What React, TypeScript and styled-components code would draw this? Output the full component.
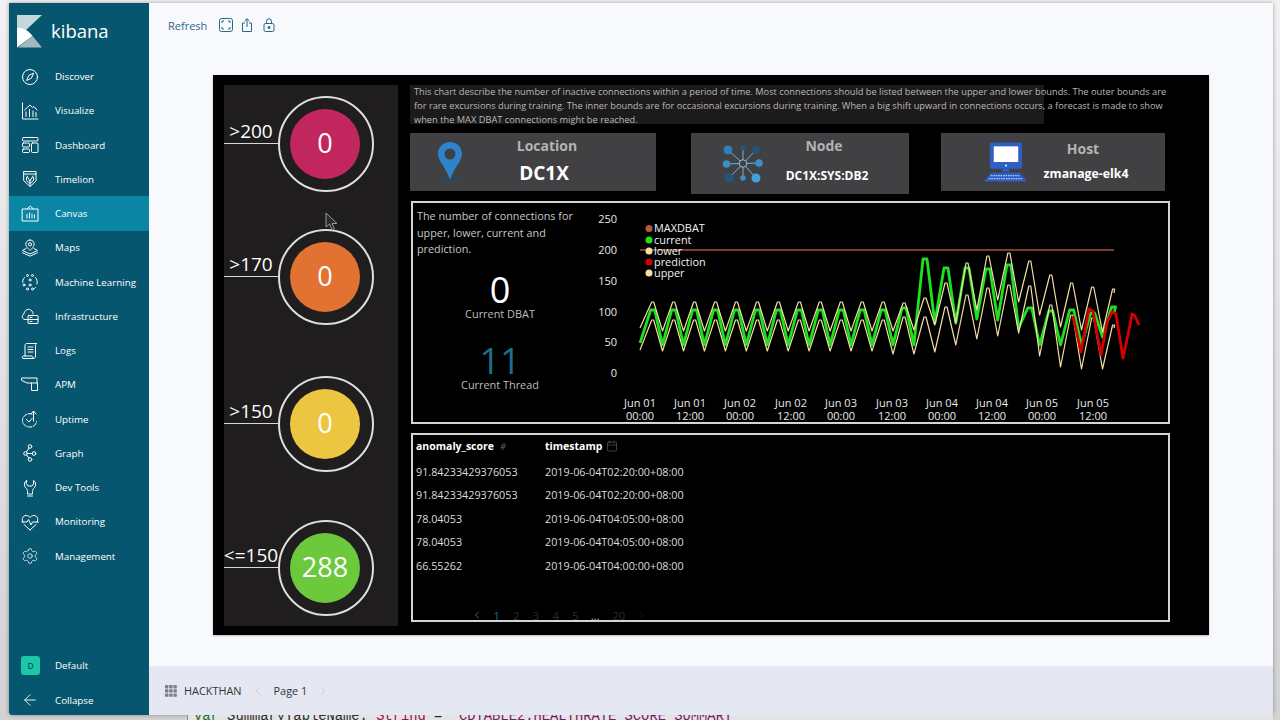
import React from 'react';
import styled, {createGlobalStyle} from 'styled-components';
import {ArrowLeft, Calendar, ChevronLeft, ChevronRight, Settings} from 'lucide-react';

const GlobalStyle = createGlobalStyle`
  html, body {
    margin: 0;
    padding: 0;
    background: #dcdcdc;
  }

  body {
    font-family: "Open Sans", "Liberation Sans", sans-serif;
  }
`;

const Page = styled.div`
  width: 1280px;
  height: 720px;
  overflow: hidden;
  padding: 3px 7px 0 9px;
  box-sizing: border-box;
  background: linear-gradient(#f2f2f2, #d2d2d2);
`;

const Frame = styled.div`
  display: flex;
  width: 1264px;
  height: 712px;
  border-radius: 0 0 3px 3px;
  overflow: hidden;
  box-shadow: 0 0 4px rgba(0, 0, 0, 0.35);
`;

const CodeStrip = styled.div`
  height: 5px;
  overflow: hidden;
  margin-left: 178px;
  padding-left: 6px;
  border-left: 1px solid #8e8e8e;
  background: #e4e4e4;
`;

const CodeLine = styled.div`
  margin-top: -5px;
  font: 13.8px/14px "Liberation Mono", monospace;
  white-space: pre;
  color: #2b2b2b;
`;

const CodeToken = styled.span<{$color: string}>`
  color: ${p => p.$color};
`;

const Sidebar = styled.nav`
  display: flex;
  flex-direction: column;
  width: 140px;
  flex: none;
  background: #07566f;
  color: #fff;
`;

const Brand = styled.div`
  display: flex;
  align-items: center;
  gap: 9px;
  height: 56.4px;
  padding: 0 0 0 8px;
  box-sizing: border-box;
`;

const BrandName = styled.span`
  font-size: 18.5px;
  line-height: 1;
  color: #fff;
`;

const NavRow = styled.div<{$active?: boolean}>`
  display: flex;
  align-items: center;
  gap: 16px;
  height: 34.26px;
  padding-left: 12px;
  font-size: 9.75px;
  font-weight: 500;
  color: #fff;
  white-space: nowrap;
  background: ${p => (p.$active ? '#0a85a4' : 'transparent')};

  svg {
    flex: none;
  }
`;

const SideFooter = styled.div`
  display: flex;
  flex-direction: column;
  gap: 5px;
  margin-top: auto;
  padding-bottom: 0;

  ${NavRow} {
    height: 30px;
  }
`;

const Avatar = styled.span`
  display: flex;
  align-items: center;
  justify-content: center;
  width: 19px;
  height: 19px;
  margin-right: -1px;
  border-radius: 3px;
  background: #1cc7a6;
  color: #07566f;
  font-size: 8.5px;
  font-weight: 600;
`;

const Main = styled.main`
  display: flex;
  flex-direction: column;
  flex: 1;
  min-width: 0;
  background: #f8f9fd;
`;

const TopBar = styled.div`
  display: flex;
  align-items: center;
  height: 44px;
  padding-left: 19px;
  color: #2c6682;
  font-size: 11px;
`;

const RefreshLabel = styled.span`
  margin-right: 12px;
`;

const TopIcon = styled.svg<{$gap: number}>`
  margin-right: ${p => p.$gap}px;
`;

const Stage = styled.div`
  flex: 1;
  padding: 28px 0 0 64px;
`;

const Workpad = styled.section`
  display: flex;
  gap: 12px;
  width: 996px;
  height: 560px;
  padding: 10px 0 0 11px;
  box-sizing: border-box;
  background: #000;
  box-shadow: 0 1px 2px rgba(0, 0, 0, 0.25);
  position: relative;
`;

const GaugePanel = styled.div`
  display: flex;
  flex-direction: column;
  width: 174px;
  height: 541px;
  flex: none;
  background: #1f1d1e;
`;

const GaugeRow = styled.div<{$top: number}>`
  display: flex;
  margin-top: ${p => p.$top}px;
`;

const GaugeLabel = styled.div`
  width: 54px;
  height: 48px;
  display: flex;
  align-items: flex-end;
  justify-content: center;
  box-sizing: border-box;
  border-bottom: 1.5px solid #d8d8d8;
  color: #fff;
  font-size: 19px;
  line-height: 24px;
  white-space: nowrap;
`;

const GaugeRing = styled.div`
  display: flex;
  align-items: center;
  justify-content: center;
  width: 96px;
  height: 96px;
  padding-right: 2px;
  box-sizing: border-box;
  border: 2px solid #dedede;
  border-radius: 50%;
`;

const GaugeDot = styled.div<{$color: string}>`
  display: flex;
  align-items: center;
  justify-content: center;
  flex: none;
  width: 70px;
  height: 70px;
  padding-bottom: 3px;
  box-sizing: border-box;
  border-radius: 50%;
  background: ${p => p.$color};
  color: #fff;
  font-size: 27px;
`;

const Cursor = styled.svg`
  position: absolute;
  left: 112px;
  top: 137px;
`;

const Column = styled.div`
  display: flex;
  flex-direction: column;
  width: 760px;
`;

const Description = styled.p`
  margin: 0;
  height: 39px;
  padding-left: 4px;
  background: linear-gradient(#1c1a1b, #1c1a1b) no-repeat;
  background-size: 634px 100%;
  color: #b9b9b9;
  font-size: 9.28px;
  line-height: 14px;
  white-space: nowrap;
`;

const CardRow = styled.div`
  display: flex;
  align-items: flex-start;
  height: 77px;
  padding-top: 9px;
  box-sizing: border-box;
`;

const Card = styled.div<{$width: number; $height: number; $left: number}>`
  display: flex;
  width: ${p => p.$width}px;
  height: ${p => p.$height}px;
  margin-left: ${p => p.$left}px;
  background: #414042;
`;

const CardIcon = styled.div<{$width: number; $pad?: number}>`
  display: flex;
  align-items: center;
  justify-content: center;
  width: ${p => p.$width}px;
  padding-left: ${p => p.$pad ?? 0}px;
  box-sizing: border-box;
  flex: none;
`;

const CardText = styled.div<{$width: number; $top: number}>`
  display: flex;
  flex-direction: column;
  align-items: center;
  width: ${p => p.$width}px;
  padding-top: ${p => p.$top}px;
`;

const CardTitle = styled.div<{$nudge?: number}>`
  margin-right: ${p => p.$nudge ?? 0}px;
  color: #b4b4b4;
  font-size: 14px;
  font-weight: 700;
  line-height: 20px;
`;

const CardValue = styled.div<{$size: number; $gap: number; $nudge?: number}>`
  margin-top: ${p => p.$gap}px;
  margin-right: ${p => p.$nudge ?? 0}px;
  color: #fff;
  font-size: ${p => p.$size}px;
  font-weight: 700;
  line-height: 22px;
  white-space: nowrap;
`;

const ChartBox = styled.div`
  display: flex;
  width: 759px;
  height: 223px;
  margin-left: 1px;
  box-sizing: border-box;
  border: 2px solid #d4d4d4;
`;

const ChartIntro = styled.div`
  display: flex;
  flex-direction: column;
  align-items: center;
  width: 177px;
  flex: none;
  padding: 5px 3px 0 0;
  box-sizing: border-box;
`;

const ChartNote = styled.div`
  width: 100%;
  height: 50px;
  padding-left: 4px;
  box-sizing: border-box;
  color: #c8c8c8;
  font-size: 10.8px;
  line-height: 16.5px;
  white-space: nowrap;
`;

const StatValue = styled.div<{$color: string; $top: number}>`
  margin-top: ${p => p.$top}px;
  color: ${p => p.$color};
  font-size: 36px;
  line-height: 34px;
`;

const StatLabel = styled.div`
  color: #bdbdbd;
  font-size: 10.9px;
  line-height: 14px;
`;

const TableBox = styled.div`
  display: flex;
  flex-direction: column;
  width: 759px;
  height: 189px;
  margin: 9px 0 0 1px;
  padding-left: 3px;
  box-sizing: border-box;
  border: 2px solid #d4d4d4;
`;

const TableRow = styled.div<{$head?: boolean}>`
  display: grid;
  flex: none;
  grid-template-columns: 129px 1fr;
  align-items: center;
  height: ${p => (p.$head ? 22.5 : 23.5)}px;
  padding-bottom: ${p => (p.$head ? 2 : 0)}px;
  color: ${p => (p.$head ? '#fff' : '#dcdcdc')};
  font-size: ${p => (p.$head ? 10.5 : 10.8)}px;
  font-weight: ${p => (p.$head ? 700 : 400)};
`;

const HeadCell = styled.span`
  display: flex;
  align-items: center;
  gap: 4px;
`;

const TypeMark = styled.span`
  color: #666;
  font-size: 9px;
  font-style: italic;
  font-weight: 400;
  margin-left: 2px;
`;

const Pager = styled.div`
  display: flex;
  flex: none;
  align-items: center;
  height: 14px;
  margin-top: 31px;
  padding-left: 51px;
`;

const PagerItem = styled.span<{$state?: 'current' | 'dim' | 'more'; $width?: number}>`
  display: flex;
  align-items: center;
  justify-content: center;
  width: ${p => p.$width ?? 19.7}px;
  font-size: 11px;
  color: ${p => (p.$state === 'current' ? '#1a6aa0' : p.$state === 'more' ? '#bbb' : '#2e2e2e')};
`;

const BottomBar = styled.footer`
  display: flex;
  align-items: center;
  height: 49px;
  padding-left: 16px;
  background: #e5e8f2;
  color: #30343a;
  font-size: 10.9px;
`;

const WorkpadName = styled.span`
  margin-left: 7px;
`;

const PageLabel = styled.span`
  margin: 0 9px;
`;

const PageChevron = styled.span`
  display: flex;
  margin-left: 9px;
  color: #b9bdc8;
`;

const NextChevron = styled(PageChevron)`
  margin-left: 0;
`;

const CHART_COLORS = {max: '#a8533c', green: '#1fe01f', cream: '#f4dfa4', red: '#d40000'};

const Icon = ({children}: {children: React.ReactNode}) => (
  <svg width="18" height="18" viewBox="0 0 18 18" fill="none" stroke="#fff" strokeWidth="1" strokeLinecap="round" strokeLinejoin="round">
    {children}
  </svg>
);

const NAV_ITEMS: {label: string; active?: boolean; icon: React.ReactNode}[] = [
  {
    label: 'Discover',
    icon: <Icon><circle cx="9" cy="9" r="7.5" /><path d="M12.5 5.5 10.3 10.3 5.5 12.5 7.7 7.7Z" /></Icon>,
  },
  {
    label: 'Visualize',
    icon: <Icon><path d="M1.5 1v16H17M3.5 8 9 3l2.5 2.5L13 4.5l3 3.5M5 14.5V10M8.5 14.5V7.5M12 14.5V9M15 14.5V10.5" /></Icon>,
  },
  {
    label: 'Dashboard',
    icon: <Icon><rect x="1.5" y="1.5" width="15.5" height="3.5" rx="1" /><rect x="1.5" y="7" width="7" height="4" rx="1" /><rect x="1.5" y="13" width="7" height="3.5" rx="1" /><rect x="10.5" y="7" width="6.5" height="9.5" rx="1" /></Icon>,
  },
  {
    label: 'Timelion',
    icon: <Icon><path d="M3 1.5h12V11l-6 5.5L3 11ZM3 4h12M6 6l3 5 3-5M9 11v5M5.5 7.5v3l3.5 3 3.5-3v-3" /></Icon>,
  },
  {
    label: 'Canvas',
    active: true,
    icon: <Icon><rect x="1.5" y="4" width="15.5" height="12" /><path d="M6 4l3.2-3L12.5 4M6 13V9.5M8.5 13V8M11 13V9M13.5 13v-3" /></Icon>,
  },
  {
    label: 'Maps',
    icon: <Icon><path d="M9 1C6.5 1 4.8 3 4.8 5.3 4.8 8 9 11.5 9 11.5s4.2-3.5 4.2-6.2C13.2 3 11.5 1 9 1Z" /><circle cx="9" cy="5.3" r="1.6" /><path d="M5 9.5 1.5 11.5 9 15l7.5-3.5L13 9.5M1.5 13.7 9 17.2l7.5-3.5" /></Icon>,
  },
  {
    label: 'Machine Learning',
    icon: <Icon><circle cx="6.5" cy="2.5" r="1" /><circle cx="11.5" cy="2.5" r="1" /><circle cx="9" cy="7" r="1" /><circle cx="3" cy="12" r="1" /><circle cx="9" cy="12" r="1" /><circle cx="6.5" cy="16" r="1" /><circle cx="11.5" cy="16" r="1" /><path d="M3.5 4.5C2 6 1.5 8 1.8 9.5M14.5 4.5C16 6 16.5 8.5 16 11M14.5 14.5l-1 .8" /></Icon>,
  },
  {
    label: 'Infrastructure',
    icon: <Icon><path d="M6 12.5H4C.5 12 .5 8 3 7c0-4 5-6.5 8-3 .8 1 1.2 2 1.2 3" /><rect x="7" y="8.5" width="10" height="8" rx=".5" /><path d="M7 12.5h10M9 10.5h2M9 14.5h2" /></Icon>,
  },
  {
    label: 'Logs',
    icon: <Icon><path d="M4 14V3.5C4 2 5 1.5 6 1.5h10C15 1.5 14.5 2.5 14.5 3.5V14c0 1.5-1 2.5-2 2.5H2c-1 0-1-2.5.5-2.5H11c.5 0 .5 2.5 1.5 2.5M7 5h5M7 7.5h5M7 10h5" /></Icon>,
  },
  {
    label: 'APM',
    icon: <Icon><path d="M1 2h15v5H6L1 4.5ZM10.5 7v7.5h6V7" /></Icon>,
  },
  {
    label: 'Uptime',
    icon: <Icon><path d="M11 4C6 2.5 1.5 6 1.5 10.5s4 6.5 7.5 6.5 6-2 6.5-5.5" strokeDasharray="4 1.5" /><path d="M12.5 11V1.5M10 4l2.5-3L15 4M5.5 9.5 8 12l3-3.5" /></Icon>,
  },
  {
    label: 'Graph',
    icon: <Icon><circle cx="9" cy="2.5" r="1.8" /><circle cx="4.5" cy="9.5" r="1.8" /><circle cx="13" cy="9.5" r="1.8" /><circle cx="9" cy="15.5" r="1.8" /><path d="M8 4 5.5 8M6.3 9.5h4.9M5.5 11 8 14" /></Icon>,
  },
  {
    label: 'Dev Tools',
    icon: <Icon><path d="M5.5 1.5C3 3 2.5 7 5 9c1 1 1.5 2 1.5 3.5V15h5v-2.5c0-1.500.5-2.500 1.500-3.500 2.500-2 2-6-.5-7.500V5L11 7H7L5.500 5ZM6.500 17h5" /></Icon>,
  },
  {
    label: 'Monitoring',
    icon: <Icon><path d="M9 17 3 11.5M9 17l6-5.500M2 9C0 6 2 2.500 5 2.500 7 2.500 8 3.500 9 4.500c1-1 2-2 4-2 3 0 5 3.500 3 6.500M.8 9H6l1.500-2.500L10 12l1.500-3h6" /></Icon>,
  },
  {
    label: 'Management',
    icon: <Settings size={18} strokeWidth={1} color="#fff" />,
  },
];

const GAUGES = [
  {label: '>200', value: '0', color: '#c1265f', top: 11},
  {label: '>170', value: '0', color: '#e27232', top: 37},
  {label: '>150', value: '0', color: '#ecc640', top: 51},
  {label: '<=150', value: '288', color: '#6cc93c', top: 48},
];

const TABLE_ROWS = [
  ['91.84233429376053', '2019-06-04T02:20:00+08:00'],
  ['91.84233429376053', '2019-06-04T02:20:00+08:00'],
  ['78.04053', '2019-06-04T04:05:00+08:00'],
  ['78.04053', '2019-06-04T04:05:00+08:00'],
  ['66.55262', '2019-06-04T04:00:00+08:00'],
];

// first twelve cycles are steady, the rest was read off the picture
const steady = (value: number, count: number) => Array.from({length: count}, () => value);

const SERIES = {
  upper: {
    start: 328,
    end: 293,
    flat: 1,
    peaks: [...steady(302, 12), 303, 298, 283, 263, 256, 253, 261, 275, 283, 287, 289],
    troughs: [...steady(331, 12), 330, 325, 323, 310, 300, 302, 315, 327, 330, 332],
  },
  lower: {
    start: 350,
    end: 328,
    flat: 1,
    peaks: [...steady(320, 12), 317, 317, 307, 295, 288, 285, 286, 305, 315, 318, 325],
    troughs: [...steady(351, 11), 354, 354, 352, 345, 339, 336, 333, 356, 367, 369, 369],
  },
  current: {
    start: 343,
    end: 313,
    flat: 2,
    peaks: [...steady(310, 12), 308, 259, 268, 268, 269, 265, 308, 311, 310, 313, 307],
    troughs: [...steady(345, 12), 345, 323, 323, 319, 320, 328, 345, 345, 345, 337],
  },
};

const toPoints = ({start, end, flat, peaks, troughs}: {start: number; end: number; flat: number; peaks: number[]; troughs: number[]}) => {
  const points = [`640,${start}`];
  peaks.forEach((peak, i) => {
    const x = 652.7 + 20.95 * i;
    points.push(`${(x - flat).toFixed(1)},${peak}`, `${(x + flat).toFixed(1)},${peak}`);
    if (i < troughs.length) {
      points.push(`${(x + 9.8).toFixed(1)},${troughs[i]}`);
    }
  });
  points.push(`1114,${end}`);
  return points.join(' ');
};

const Y_TICKS = [
  {label: '250', y: 219},
  {label: '200', y: 250},
  {label: '150', y: 281},
  {label: '100', y: 312},
  {label: '50', y: 342},
  {label: '0', y: 373},
];

const X_TICKS = [
  {x: 640, day: 'Jun 01', time: '00:00'},
  {x: 690, day: 'Jun 01', time: '12:00'},
  {x: 740, day: 'Jun 02', time: '00:00'},
  {x: 791, day: 'Jun 02', time: '12:00'},
  {x: 841, day: 'Jun 03', time: '00:00'},
  {x: 892, day: 'Jun 03', time: '12:00'},
  {x: 942, day: 'Jun 04', time: '00:00'},
  {x: 992, day: 'Jun 04', time: '12:00'},
  {x: 1042, day: 'Jun 05', time: '00:00'},
  {x: 1093, day: 'Jun 05', time: '12:00'},
];

const LEGEND = [
  {label: 'MAXDBAT', y: 228.5, color: '#b5583f'},
  {label: 'current', y: 240, color: CHART_COLORS.green},
  {label: 'lower', y: 251, color: CHART_COLORS.cream},
  {label: 'prediction', y: 262, color: CHART_COLORS.red},
  {label: 'upper', y: 273, color: CHART_COLORS.cream},
];

const Chart = () => (
  <svg width="577" height="219" viewBox="590 203 577 219" fontFamily="'Open Sans', sans-serif" fontSize="11" fill="#e8e8e8">
    {Y_TICKS.map(t => (
      <text key={t.label} x="617" y={t.y + 4} textAnchor="end">{t.label}</text>
    ))}
    {X_TICKS.map(t => (
      <text key={t.x} x={t.x} textAnchor="middle">
        <tspan x={t.x} y="407">{t.day}</tspan>
        <tspan x={t.x} y="420">{t.time}</tspan>
      </text>
    ))}
    <line x1="640" x2="1114" y1="250" y2="250" stroke={CHART_COLORS.max} strokeWidth="1.5" />
    <polyline points={toPoints(SERIES.current)} fill="none" stroke={CHART_COLORS.green} strokeWidth="2.8" strokeLinejoin="round" />
    <polyline points={toPoints(SERIES.lower)} fill="none" stroke={CHART_COLORS.cream} strokeWidth="1.2" strokeLinejoin="round" />
    <polyline points="1073,316 1081,352 1089,309 1093,311 1101,355 1107,322 1112,312 1116,314 1123,358 1129,330 1132,314 1135,316 1139,325" fill="none" stroke={CHART_COLORS.red} strokeWidth="2.8" strokeLinejoin="round" />
    <polyline points={toPoints(SERIES.upper)} fill="none" stroke={CHART_COLORS.cream} strokeWidth="1.2" strokeLinejoin="round" />
    {LEGEND.map(item => (
      <g key={item.label}>
        <circle cx="649" cy={item.y} r="3.5" fill={item.color} />
        <text x="654" y={item.y + 3.5} fontSize="10.9" fill="#f2f2f2">{item.label}</text>
      </g>
    ))}
  </svg>
);

const KibanaLogo = () => (
  <svg width="25" height="33" viewBox="0 0 25 33">
    <path d="M0 0h25L8 16 0 12.5Z" fill="#c4d7db" />
    <path d="M0 12.5C7 13 12 16 15.5 21L0 32.5Z" fill="#fff" />
    <path d="M15.5 21 25 32.5H1Z" fill="#a2b8bd" />
  </svg>
);

const PinIcon = () => (
  <svg width="26" height="42" viewBox="0 0 26 42">
    <ellipse cx="13" cy="38" rx="11" ry="3" fill="none" stroke="#1f4f7d" strokeWidth="1" />
    <path d="M13 1C6 1 1 6.5 1 13c0 7 8 13 12 26 4-13 12-19 12-26C25 6.5 20 1 13 1Z" fill="#2f82cc" />
    <circle cx="13" cy="13" r="5.5" fill="#414042" />
  </svg>
);

const NodeIcon = () => {
  const outer = [
    {x: 5, y: 5, r: 4.5, c: '#2d7fc0'},
    {x: 20, y: 3, r: 2.5, c: '#24557c'},
    {x: 33, y: 5, r: 3.8, c: '#24557c'},
    {x: 3.5, y: 19, r: 3.8, c: '#3a8ec9'},
    {x: 36, y: 18, r: 3.8, c: '#3a8ec9'},
    {x: 6, y: 33, r: 4.5, c: '#24557c'},
    {x: 20, y: 33, r: 2.8, c: '#3a8ec9'},
    {x: 33, y: 33, r: 4.5, c: '#43a0dc'},
  ];
  return (
    <svg width="40" height="38" viewBox="0 0 40 38">
      {outer.map(n => (
        <g key={`${n.x}-${n.y}`}>
          <line x1="20" y1="18.5" x2={n.x} y2={n.y} stroke="#6eb4e0" strokeWidth="1" />
          <circle cx={n.x} cy={n.y} r={n.r} fill={n.c} />
        </g>
      ))}
      <circle cx="20" cy="18.5" r="3.8" fill="#414042" stroke="#8cc6ea" strokeWidth="1" />
    </svg>
  );
};

const HostIcon = () => (
  <svg width="46" height="41" viewBox="0 0 46 41">
    <rect x="7" y="0" width="33" height="27" rx="2" fill="#2f5fc4" />
    <rect x="11" y="4" width="25" height="16" fill="#fff" />
    <circle cx="23.5" cy="23.5" r="1" fill="#fff" />
    <rect x="20" y="27" width="7" height="3" fill="#2f5fc4" />
    <path d="M8 31h30l7 9H1Z" fill="#2f5fc4" />
    <path d="M8 34h30M6 37h34" stroke="#bcd0f5" strokeWidth="1.2" strokeDasharray="1.5 1" />
  </svg>
);

const WorkpadGrid = () => (
  <svg width="12" height="12" viewBox="0 0 12 12" fill="#7b7f8a">
    {[0, 4.2, 8.4].flatMap(y => [0, 4.2, 8.4].map(x => <rect key={`${x}-${y}`} x={x} y={y} width="3.4" height="3.4" rx=".6" />))}
  </svg>
);

const App = () => (
  <>
    <GlobalStyle />
    <Page>
      <Frame>
        <Sidebar>
          <Brand>
            <KibanaLogo />
            <BrandName>kibana</BrandName>
          </Brand>
          {NAV_ITEMS.map(item => (
            <NavRow key={item.label} $active={item.active}>
              {item.icon}
              {item.label}
            </NavRow>
          ))}
          <SideFooter>
            <NavRow>
              <Avatar>D</Avatar>
              Default
            </NavRow>
            <NavRow>
              <ArrowLeft size={18} strokeWidth={1.2} color="#fff" />
              Collapse
            </NavRow>
          </SideFooter>
        </Sidebar>
        <Main>
          <TopBar>
            <RefreshLabel>Refresh</RefreshLabel>
            <TopIcon $gap={7.5} width="14" height="14" viewBox="0 0 14 14" fill="none" stroke="#2c6682" strokeWidth="1">
              <rect x=".5" y=".5" width="13" height="13" rx="2" />
              <path d="M3 5V3h2M9 3h2v2M11 9v2H9M5 11H3V9" />
            </TopIcon>
            <TopIcon $gap={10} width="12" height="14" viewBox="0 0 12 14" fill="none" stroke="#2c6682" strokeWidth="1">
              <path d="M4 5H1.5v8.5h9V5H8M6 9V.8M3.5 3 6 .8 8.5 3" />
            </TopIcon>
            <TopIcon $gap={0} width="12" height="14" viewBox="0 0 12 14" fill="none" stroke="#2c6682" strokeWidth="1">
              <rect x="1" y="5.5" width="10" height="8" rx="1.5" />
              <path d="M3.5 5.5V3.3a2.5 2.5 0 0 1 5 0v2.2" />
              <circle cx="6" cy="9.5" r="1" fill="#2c6682" />
            </TopIcon>
          </TopBar>
          <Stage>
            <Workpad>
              <GaugePanel>
                {GAUGES.map(gauge => (
                  <GaugeRow key={gauge.label} $top={gauge.top}>
                    <GaugeLabel>{gauge.label}</GaugeLabel>
                    <GaugeRing>
                      <GaugeDot $color={gauge.color}>{gauge.value}</GaugeDot>
                    </GaugeRing>
                  </GaugeRow>
                ))}
              </GaugePanel>
              <Column>
                <Description>
                  This chart describe the number of inactive connections within a period of time. Most connections should be listed between the upper and lower bounds. The outer bounds are
                  <br />
                  for rare excursions during training. The inner bounds are for occasional excursions during training. When a big shift upward in connections occurs, a forecast is made to show
                  <br />
                  when the MAX DBAT connections might be reached.
                </Description>
                <CardRow>
                  <Card $width={246} $height={58} $left={0}>
                    <CardIcon $width={79}><PinIcon /></CardIcon>
                    <CardText $width={116} $top={3}>
                      <CardTitle>Location</CardTitle>
                      <CardValue $size={19} $gap={6} $nudge={6}>DC1X</CardValue>
                    </CardText>
                  </Card>
                  <Card $width={218} $height={61} $left={35}>
                    <CardIcon $width={104}><NodeIcon /></CardIcon>
                    <CardText $width={64} $top={3}>
                      <CardTitle $nudge={6}>Node</CardTitle>
                      <CardValue $size={12} $gap={9}>DC1X:SYS:DB2</CardValue>
                    </CardText>
                  </Card>
                  <Card $width={224} $height={58} $left={32}>
                    <CardIcon $width={87} $pad={42}><HostIcon /></CardIcon>
                    <CardText $width={110} $top={6}>
                      <CardTitle>Host</CardTitle>
                      <CardValue $size={12.3} $gap={4} $nudge={-6}>zmanage-elk4</CardValue>
                    </CardText>
                  </Card>
                </CardRow>
                <ChartBox>
                  <ChartIntro>
                    <ChartNote>
                      The number of connections for
                      <br />
                      upper, lower, current and
                      <br />
                      prediction.
                    </ChartNote>
                    <StatValue $color="#fff" $top={15}>0</StatValue>
                    <StatLabel>Current DBAT</StatLabel>
                    <StatValue $color="#1d6f8e" $top={23}>11</StatValue>
                    <StatLabel>Current Thread</StatLabel>
                  </ChartIntro>
                  <Chart />
                </ChartBox>
                <TableBox>
                  <TableRow $head>
                    <HeadCell>anomaly_score <TypeMark>#</TypeMark></HeadCell>
                    <HeadCell>timestamp <Calendar size={12} strokeWidth={1} color="#777" /></HeadCell>
                  </TableRow>
                  {TABLE_ROWS.map(([score, time], i) => (
                    <TableRow key={i}>
                      <span>{score}</span>
                      <span>{time}</span>
                    </TableRow>
                  ))}
                  <Pager>
                    <PagerItem $state="more"><ChevronLeft size={12} strokeWidth={1} /></PagerItem>
                    <PagerItem $state="current">1</PagerItem>
                    <PagerItem $state="dim">2</PagerItem>
                    <PagerItem $state="dim">3</PagerItem>
                    <PagerItem $state="dim">4</PagerItem>
                    <PagerItem $state="dim">5</PagerItem>
                    <PagerItem $state="more">...</PagerItem>
                    <PagerItem $state="dim" $width={28}>20</PagerItem>
                    <PagerItem $state="dim" $width={19}><ChevronRight size={12} strokeWidth={1} /></PagerItem>
                  </Pager>
                </TableBox>
              </Column>
              <Cursor width="14" height="19" viewBox="0 0 14 19">
                <path d="M1 1v14l3.5-3 2.5 6 2.5-1-2.5-5.5H12Z" fill="#2a2a2a" stroke="#9a9a9a" strokeWidth="1" />
              </Cursor>
            </Workpad>
          </Stage>
          <BottomBar>
            <WorkpadGrid />
            <WorkpadName>HACKTHAN</WorkpadName>
            <PageChevron><ChevronLeft size={14} strokeWidth={1} /></PageChevron>
            <PageLabel>Page 1</PageLabel>
            <NextChevron><ChevronRight size={14} strokeWidth={1} /></NextChevron>
          </BottomBar>
        </Main>
      </Frame>
      <CodeStrip>
        <CodeLine>
          <CodeToken $color="#1d6b2a">var</CodeToken> SummaryTableName: <CodeToken $color="#a0104a">String</CodeToken> = <CodeToken $color="#7a1a6a">"CDTABLE2.HEALTHRATE_SCORE_SUMMARY"</CodeToken>
        </CodeLine>
      </CodeStrip>
    </Page>
  </>
);

export default App;
